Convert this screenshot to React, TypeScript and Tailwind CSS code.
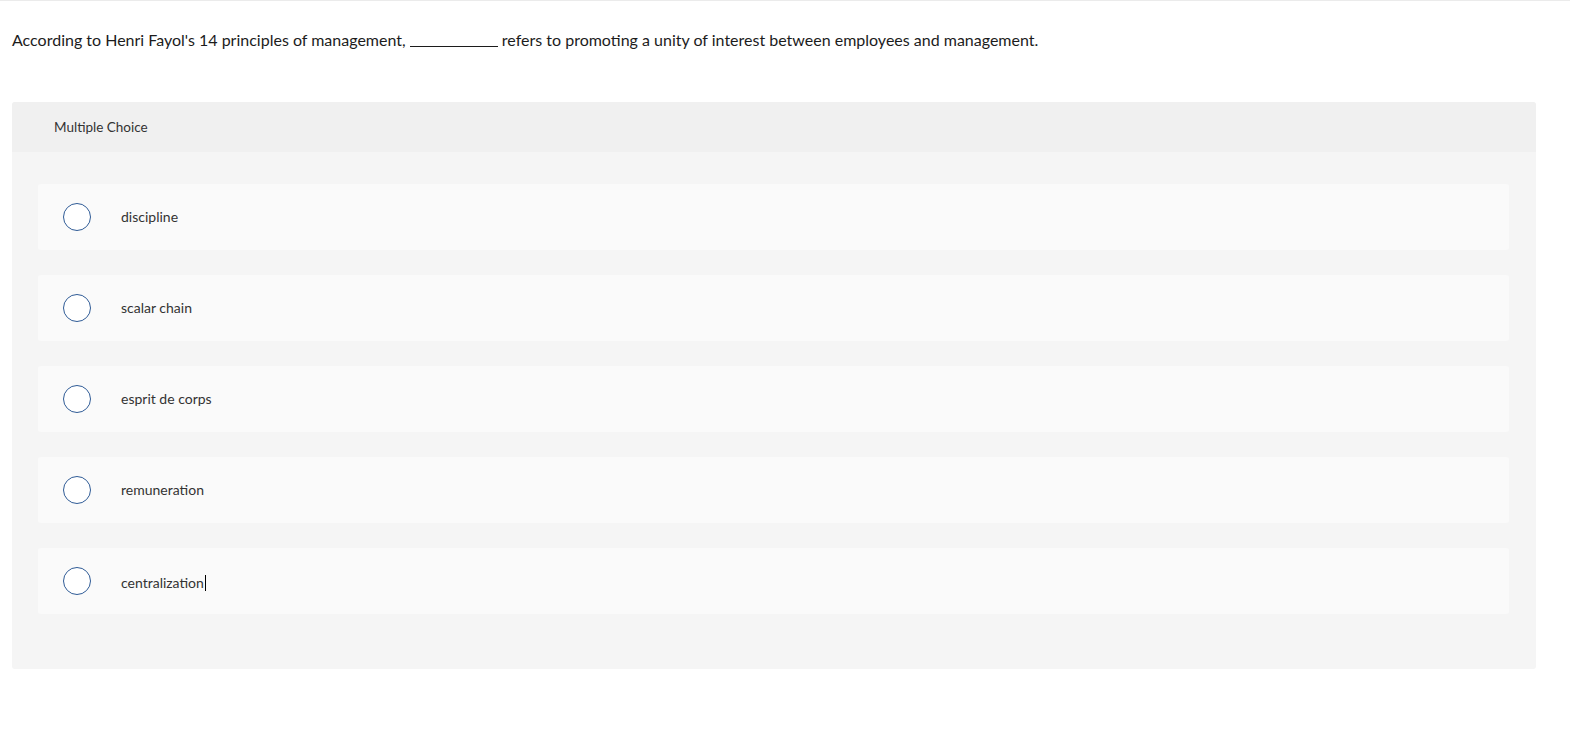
const OPTIONS = ['discipline', 'scalar chain', 'esprit de corps', 'remuneration', 'centralization'];

function Option({ label, caret }: { label: string; caret?: boolean }) {
  return (
    <div className="flex h-[66px] items-center rounded-[3px] bg-[#fafafa] pl-[25px]">
      <span className="box-border h-[28px] w-[28px] shrink-0 rounded-full border-[1.5px] border-[#2f5b96] bg-white" />
      <span className="ml-[30px] text-[14px] leading-none text-[#333]">
        {label}
        {caret && <span className="ml-px inline-block h-[16px] w-px translate-y-[3px] bg-black" />}
      </span>
    </div>
  );
}

export default function App() {
  return (
    <div
      className="min-h-[739px] border-t border-[#ebebeb] bg-white"
      style={{ fontFamily: 'Lato, "Open Sans", sans-serif' }}
    >
      <p className="pl-[12px] pt-[29px] text-[16px] leading-[19px] text-[#1c1c1c]">
        According to Henri Fayol's 14 principles of management,{' '}
        <span className="inline-block w-[88px] translate-y-[1px] border-b border-[#1c1c1c] align-baseline" />{' '}
        refers to promoting a unity of interest between employees and management.
      </p>

      <div className="ml-[12px] mt-[53px] w-[1524px] overflow-hidden rounded-[3px] bg-[#f5f5f5]">
        <div className="flex h-[50px] items-center bg-[#f0f0f0] pl-[42px] text-[13.5px] text-[#333]">
          Multiple Choice
        </div>
        <div className="flex flex-col gap-[25px] pb-[55px] pl-[26px] pr-[27px] pt-[32px]">
          {OPTIONS.map((o, i) => (
            <Option key={o} label={o} caret={i === OPTIONS.length - 1} />
          ))}
        </div>
      </div>
    </div>
  );
}
